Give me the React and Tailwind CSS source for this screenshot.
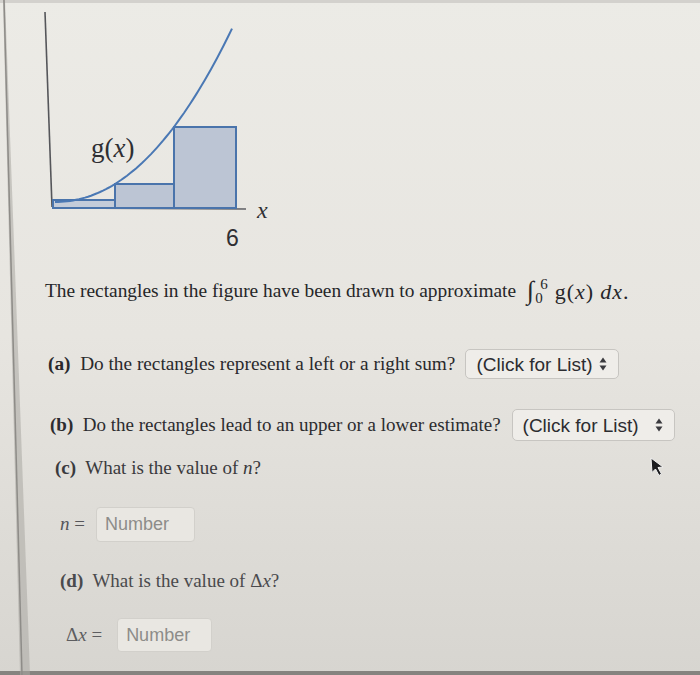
import React from 'react'

const serif = { fontFamily: '"Liberation Serif", "Times New Roman", serif' }
const sans = { fontFamily: '"Liberation Sans", Arial, sans-serif' }

// curve through the top-left corners of the rectangles
const curvePoints = () => {
  const pts = []
  for (let x = 55; x <= 233; x += 3) {
    const y = 202 - 0.0027 * Math.pow(x - 53, 2.134)
    pts.push(`${x},${y.toFixed(1)}`)
  }
  return pts.join(' ')
}

function Figure() {
  return (
    <svg width="300" height="250" viewBox="0 0 300 250" className="block shrink-0">
      <line x1="45" y1="12" x2="52" y2="207" stroke="#55565a" strokeWidth="1.6" />
      <line x1="52" y1="208" x2="246" y2="209" stroke="#5f6065" strokeWidth="1.6" />
      <rect x="53" y="200" width="62" height="8" fill="#c4ccd9" stroke="#4a74ab" strokeWidth="2" />
      <rect x="115" y="184" width="59" height="24" fill="#bcc5d4" stroke="#4a74ab" strokeWidth="2" />
      <rect x="174" y="127" width="62" height="81" fill="#bcc5d4" stroke="#4a74ab" strokeWidth="2" />
      <polyline points={curvePoints()} fill="none" stroke="#4a78b4" strokeWidth="2" />
      <text x="91" y="157" fontSize="27" fill="#2f2f33" style={serif}>
        g(<tspan fontStyle="italic">x</tspan>)
      </text>
      <text x="257" y="218" fontSize="24" fontStyle="italic" fill="#2f2f33" style={serif}>x</text>
      <text x="226" y="246" fontSize="23" fill="#2f2f33" style={sans}>6</text>
    </svg>
  )
}

function Arrows() {
  return (
    <svg width="8" height="14" viewBox="0 0 8 14" className="shrink-0">
      <path d="M4 0.5 L7.5 5.5 L0.5 5.5 Z" fill="#3a3a3e" />
      <path d="M4 13.5 L7.5 8.5 L0.5 8.5 Z" fill="#3a3a3e" />
    </svg>
  )
}

function Select({ width, height, gap }) {
  return (
    <div
      className="flex items-center rounded-[5px] border border-[#c7c5c1] bg-[#efede9] pl-[10px] pr-[7px] text-[19px] text-[#2c2c30]"
      style={{ ...sans, width, height }}
    >
      <span className="leading-none">(Click for List)</span>
      <span className={gap}><Arrows /></span>
    </div>
  )
}

function NumberBox({ width, height }) {
  return (
    <div
      className="flex items-center rounded-[4px] border border-[#d2d0cb] bg-[#e9e7e2] pl-[8px] text-[18px] text-[#8d8c89]"
      style={{ ...sans, width, height }}
    >
      Number
    </div>
  )
}

export default function App() {
  return (
    <div className="relative flex h-[675px] w-[700px] flex-col overflow-hidden bg-linear-to-b from-[#ecebe6] via-[#e7e5e0] to-[#d7d5d0] text-[#2b2b2e]" style={serif}>
      <div className="h-[3px] bg-[#d3d1cd]" />
      <div className="-mt-[3px]">
        <Figure />
      </div>

      <p className="mt-[26px] flex h-[30px] items-center pl-[45px] text-[19.4px] text-[#262629]">
        <span>The rectangles in the figure have been drawn to approximate</span>
        <span className="ml-[11px] flex items-center">
          <span className="text-[26px] italic leading-none">∫</span>
          <span className="ml-[1px] flex flex-col text-[15px] leading-[14px]">
            <span className="pl-[5px]">6</span>
            <span>0</span>
          </span>
          <span className="ml-[7px] text-[22px] tracking-[1px]">
            g(<i>x</i>)<i className="ml-[6px]">dx</i>.
          </span>
        </span>
      </p>

      <div className="mt-[43px] flex h-[30px] items-center pl-[48px] text-[19.3px] text-[#29292c]">
        <span><b>(a)</b>&nbsp; Do the rectangles represent a left or a right sum?</span>
        <div className="ml-[10px]">
          <Select width={154} height={30} gap="ml-[6px]" />
        </div>
      </div>

      <div className="mt-[30px] flex h-[32px] items-center pl-[50px] text-[19px] text-[#2c2c2f]">
        <span><b>(b)</b>&nbsp; Do the rectangles lead to an upper or a lower estimate?</span>
        <div className="ml-[11px]">
          <Select width={163} height={32} gap="ml-auto mr-1" />
        </div>
      </div>

      <div className="mt-[15px] h-[24px] pl-[55px] text-[19px] leading-[24px] text-[#3a3a3d]">
        <b>(c)</b>&nbsp; What is the value of <i>n</i>?
      </div>

      <div className="mt-[27px] flex h-[35px] items-center pl-[60px] text-[19px] text-[#56565a]">
        <span><i>n</i> =</span>
        <div className="ml-[11px]">
          <NumberBox width={99} height={35} />
        </div>
      </div>

      <div className="mt-[27px] h-[24px] pl-[60px] text-[19px] leading-[24px] text-[#4a4a4d]">
        <b>(d)</b>&nbsp; What is the value of Δ<i>x</i>?
      </div>

      <div className="mt-[25px] flex h-[34px] items-center pl-[66px] text-[19px] text-[#5d5d60]">
        <span>Δ<i>x</i> =</span>
        <div className="ml-[15px]">
          <NumberBox width={95} height={34} />
        </div>
      </div>

      <div className="mt-auto h-[4px] bg-[#85837f]" />

      {/* screen edge running down the left side */}
      <svg className="pointer-events-none absolute left-0 top-0" width="40" height="675" viewBox="0 0 40 675">
        <polygon points="3,0 5,0 30,675 20,675" fill="#a9a7a3" opacity="0.55" />
        <line x1="4" y1="0" x2="22" y2="675" stroke="#8e8c88" strokeWidth="1.5" />
      </svg>

      {/* mouse pointer */}
      <svg className="pointer-events-none absolute left-[648px] top-[456px]" width="20" height="22" viewBox="0 0 20 22">
        <path d="M3 2 L15 11 L10 11.5 L13.5 18 L11 19.5 L7.5 13 L4 16.5 Z" fill="#1c1c1f" stroke="#f2f2f2" strokeWidth="1" />
      </svg>
    </div>
  )
}
